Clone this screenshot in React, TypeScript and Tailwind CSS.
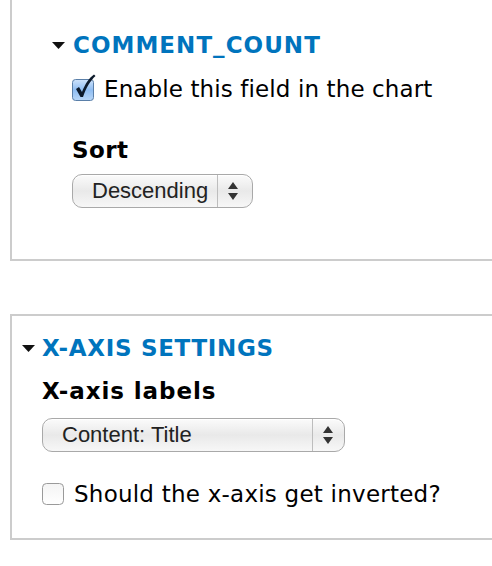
import React from "react";

// Two collapsible chart-settings fieldsets, in the old Drupal/Seven look.

const sans = { fontFamily: '"DejaVu Sans", "Lucida Grande", sans-serif' };
const helv = { fontFamily: '"Liberation Sans", Arial, sans-serif' };

function Caret() {
  return (
    <svg width="13" height="7" viewBox="0 0 13 7" className="shrink-0">
      <path d="M0 0 H13 L6.5 7 Z" fill="#111" />
    </svg>
  );
}

function CheckedBox() {
  return (
    <svg width="24" height="28" viewBox="0 0 24 28" className="shrink-0">
      <defs>
        <linearGradient id="cbOn" x1="0" y1="0" x2="0" y2="1">
          <stop offset="0" stopColor="#cfe3fb" />
          <stop offset="0.5" stopColor="#8fbdf2" />
          <stop offset="1" stopColor="#b9d7f8" />
        </linearGradient>
      </defs>
      <rect x="0.5" y="5.5" width="21" height="21" rx="3" fill="url(#cbOn)" stroke="#5a7fa8" />
      <path
        d="M4 15 L7 13 L10 18 C13 10 17 4 22 0.5 L23.5 2 C18.5 6.5 14 14 11 23 L8.5 23 Z"
        fill="#0d1a2b"
      />
    </svg>
  );
}

function EmptyBox() {
  return (
    <svg width="22" height="22" viewBox="0 0 22 22" className="shrink-0">
      <defs>
        <linearGradient id="cbOff" x1="0" y1="0" x2="0" y2="1">
          <stop offset="0" stopColor="#f4f4f4" />
          <stop offset="1" stopColor="#ffffff" />
        </linearGradient>
      </defs>
      <rect x="0.5" y="0.5" width="21" height="21" rx="4" fill="url(#cbOff)" stroke="#9a9a9a" />
    </svg>
  );
}

function Select({ label, width, divider }: { label: string; width: number; divider: number }) {
  return (
    <div
      className="relative flex h-[34px] items-center rounded-[10px] border border-[#a9a9a9] bg-gradient-to-b from-[#fbfbfb] via-[#e9e9e9] to-[#f7f7f7] shadow-[inset_0_1px_0_#fff]"
      style={{ width }}
    >
      <span className="pl-[19px] text-[22px] leading-none text-[#222]" style={helv}>
        {label}
      </span>
      <div className="absolute top-0 h-full w-px bg-[#bdbdbd]" style={{ left: divider }} />
      <svg
        width="10"
        height="18"
        viewBox="0 0 10 18"
        className="absolute top-[7px]"
        style={{ left: divider + 11 }}
      >
        <path d="M0 7 L5 0 L10 7 Z M0 11 L5 18 L10 11 Z" fill="#333" />
      </svg>
    </div>
  );
}

export default function App() {
  return (
    <div className="h-[566px] w-[492px] overflow-hidden bg-white text-black">
      {/* first fieldset: top border is scrolled off the page */}
      <div className="ml-[10px] h-[261px] w-[500px] border-x-2 border-b-2 border-[#cccccc] pl-[40px] pt-[34px]">
        <div className="flex items-center gap-[8px]">
          <Caret />
          <span
            className="text-[23px] font-bold leading-[22px] tracking-[0.045em] text-[#0074bd]"
            style={sans}
          >
            COMMENT_COUNT
          </span>
        </div>
        <div className="ml-[20px] mt-[18px] flex items-end gap-[8px]">
          <CheckedBox />
          <span className="text-[23px] leading-[26px] tracking-[0.005em]" style={sans}>
            Enable this field in the chart
          </span>
        </div>
        <div
          className="ml-[20px] mt-[37px] text-[23px] font-bold leading-[22px] tracking-[0.02em]"
          style={sans}
        >
          Sort
        </div>
        <div className="ml-[20px] mt-[13px]">
          <Select label="Descending" width={181} divider={144} />
        </div>
      </div>

      {/* second fieldset */}
      <div className="ml-[10px] mt-[53px] h-[226px] w-[500px] border-2 border-[#cccccc] pl-[10px] pt-[21px]">
        <div className="flex items-center gap-[7px]">
          <Caret />
          <span
            className="text-[23px] font-bold leading-[22px] tracking-[0.03em] text-[#0074bd]"
            style={sans}
          >
            X-AXIS SETTINGS
          </span>
        </div>
        <div
          className="ml-[20px] mt-[21px] text-[23px] font-bold leading-[22px] tracking-[0.04em]"
          style={sans}
        >
          X-axis labels
        </div>
        <div className="ml-[20px] mt-[16px]">
          <Select label="Content: Title" width={303} divider={269} />
        </div>
        <div className="ml-[20px] mt-[31px] flex items-center gap-[10px]">
          <EmptyBox />
          <span className="text-[23px] leading-[22px] tracking-[0.01em]" style={sans}>
            Should the x-axis get inverted?
          </span>
        </div>
      </div>
    </div>
  );
}
